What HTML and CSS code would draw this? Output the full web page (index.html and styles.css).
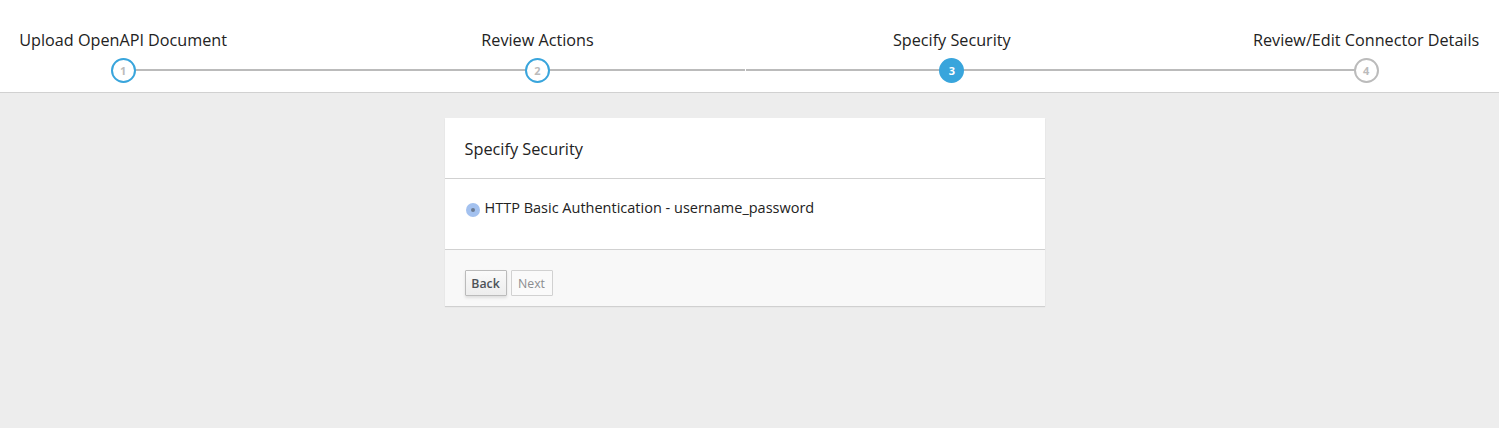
FILE: index.html
```html
<!DOCTYPE html>
<html>
<head>
<meta charset="utf-8">
<link rel="stylesheet" href="styles.css">
</head>
<body>
<header class="steps-bar">
  <ol class="steps">
    <li class="step done"><span class="step-label">Upload OpenAPI Document</span><span class="step-num">1</span></li>
    <li class="step done"><span class="step-label">Review Actions</span><span class="step-num">2</span></li>
    <li class="step active"><span class="step-label">Specify Security</span><span class="step-num">3</span></li>
    <li class="step"><span class="step-label">Review/Edit Connector Details</span><span class="step-num">4</span></li>
  </ol>
</header>
<main class="content">
  <section class="card">
    <div class="card-head">Specify Security</div>
    <div class="card-body">
      <label class="radio"><span class="radio-dot"></span>HTTP Basic Authentication - username_password</label>
    </div>
    <div class="card-foot">
      <button class="btn">Back</button>
      <button class="btn disabled">Next</button>
    </div>
  </section>
</main>
</body>
</html>
```
FILE: styles.css
```css
html, body {
  margin: 0;
  padding: 0;
  height: 100%;
}
body {
  background: #ededed;
  font-family: "Open Sans", "Liberation Sans", sans-serif;
  color: #363636;
  overflow: hidden;
}
.steps-bar {
  background: #fff;
  border-bottom: 1px solid #d1d1d1;
  height: 92px;
  overflow: hidden;
}
.steps {
  list-style: none;
  margin: 0 0 0 -84px;
  padding: 0;
  display: grid;
  grid-template-columns: repeat(4, 414.33px);
}
.step {
  position: relative;
  display: flex;
  flex-direction: column;
  align-items: center;
  padding-top: 29px;
}
.step::before,
.step::after {
  content: "";
  position: absolute;
  top: 69px;
  height: 2px;
  width: 50%;
  background: #bbb;
}
.step::before { left: 0; }
.step::after { right: 0; }
.step:first-child::before,
.step:last-child::after { display: none; }
.step:nth-child(3)::before { left: 1px; }
.step-label {
  font-size: 16.2px;
  line-height: 22px;
  color: #222;
  white-space: nowrap;
}
.step-num {
  position: relative;
  z-index: 1;
  margin-top: 7px;
  box-sizing: border-box;
  width: 25px;
  height: 25px;
  border-radius: 50%;
  border: 2px solid #bbb;
  background: #fff;
  color: #bbb;
  font-size: 11px;
  font-weight: 700;
  line-height: 21px;
  text-align: center;
}
.step.done .step-num { border-color: #39a5dc; }
.step.active .step-num {
  border-color: #39a5dc;
  background: #39a5dc;
  color: #fff;
}
.content {
  display: flex;
  justify-content: center;
  padding: 25px 10px 0 0;
}
.card {
  width: 600px;
  background: #fff;
  box-shadow: 0 1px 1px rgba(3, 3, 3, 0.12);
}
.card-head {
  height: 61px;
  box-sizing: border-box;
  padding: 20px 20px 0;
  font-size: 16.3px;
  line-height: 22px;
  color: #222;
  border-bottom: 1px solid #d1d1d1;
}
.card-body {
  height: 71px;
  box-sizing: border-box;
  padding: 19px 20px 0;
  border-bottom: 1px solid #d1d1d1;
}
.radio {
  display: flex;
  align-items: center;
  font-size: 14.5px;
  line-height: 20px;
  color: #222;
}
.radio-dot {
  width: 14px;
  height: 14px;
  border-radius: 50%;
  background: #a3c1ef;
  margin: 4px 5px 0 1px;
  display: flex;
  align-items: center;
  justify-content: center;
}
.radio-dot::after {
  content: "";
  width: 4px;
  height: 4px;
  border-radius: 50%;
  background: #6b7a90;
}
.card-foot {
  background: #f8f8f8;
  padding: 20px 20px 10px;
  height: 56px;
  box-sizing: border-box;
  display: flex;
  gap: 4px;
  align-items: flex-start;
}
.btn {
  font-family: "Open Sans", "Liberation Sans", sans-serif;
  font-size: 12.3px;
  font-weight: 600;
  height: 26px;
  width: 42px;
  padding: 0;
  border-radius: 1px;
  border: 1px solid #bbb;
  background: linear-gradient(#fafafa, #ededed);
  color: #4d5258;
  box-shadow: 0 2px 3px rgba(3, 3, 3, 0.1);
}
.btn.disabled {
  border-color: #d1d1d1;
  background: #fafafa;
  color: #8b8d8f;
  box-shadow: none;
  font-weight: 400;
}
```
